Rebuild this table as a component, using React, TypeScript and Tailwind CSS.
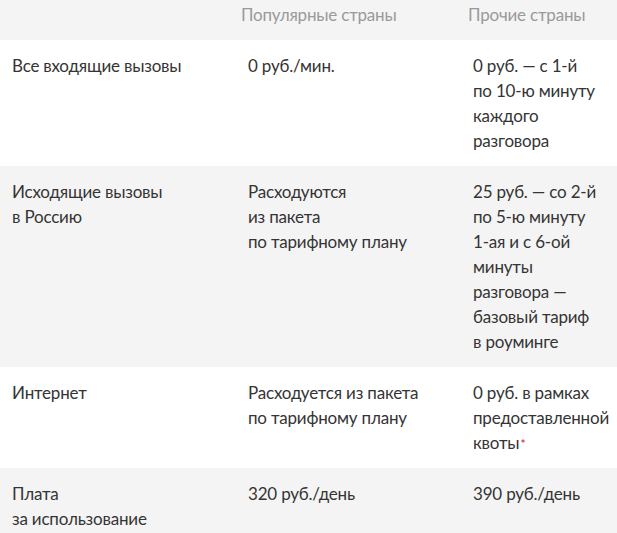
import React from 'react';

type Row = {
  label: string[];
  popular: string[];
  other: string[];
  note?: boolean;
  shaded?: boolean;
};

const rows: Row[] = [
  {
    label: ['Все входящие вызовы'],
    popular: ['0 руб./мин.'],
    other: ['0 руб. — с 1-й', 'по 10-ю минуту', 'каждого', 'разговора'],
  },
  {
    label: ['Исходящие вызовы', 'в Россию'],
    popular: ['Расходуются', 'из пакета', 'по тарифному плану'],
    other: ['25 руб. — со 2-й', 'по 5-ю минуту', '1-ая и с 6-ой', 'минуты', 'разговора —', 'базовый тариф', 'в роуминге'],
    shaded: true,
  },
  {
    label: ['Интернет'],
    popular: ['Расходуется из пакета', 'по тарифному плану'],
    other: ['0 руб. в рамках', 'предоставленной', 'квоты'],
    note: true,
  },
  {
    label: ['Плата', 'за использование'],
    popular: ['320 руб./день'],
    other: ['390 руб./день'],
    shaded: true,
  },
];

const Lines = ({ lines, note }: { lines: string[]; note?: boolean }) => (
  <div>
    {lines.map((line, i) => (
      <div key={i} className="whitespace-nowrap">
        {line}
        {note && i === lines.length - 1 && (
          <sup className="ml-[1px] text-[12px] font-bold text-[#e2334f] relative top-[-1px]">*</sup>
        )}
      </div>
    ))}
  </div>
);

export default function App() {
  return (
    <div className="w-[617px] h-[533px] overflow-hidden bg-white font-['Lato',sans-serif] text-[17px] leading-[25px] tracking-[-0.2px] text-[#343434]">
      <div className="grid grid-cols-[235px_226px_1fr] h-[40px] bg-[#f4f4f4] text-[#9a9a9a] pt-[2px]">
        <div />
        <div className="pl-[6px] whitespace-nowrap">Популярные страны</div>
        <div className="pl-[7px] whitespace-nowrap">Прочие страны</div>
      </div>
      {rows.map((row, i) => (
        <div
          key={i}
          className={`grid grid-cols-[235px_226px_1fr] pt-[13px] pb-[13px] ${row.shaded ? 'bg-[#f4f4f4]' : 'bg-white'}`}
        >
          <div className="pl-[12px]">
            <Lines lines={row.label} />
          </div>
          <div className="pl-[13px]">
            <Lines lines={row.popular} />
          </div>
          <div className="pl-[12px]">
            <Lines lines={row.other} note={row.note} />
          </div>
        </div>
      ))}
    </div>
  );
}
